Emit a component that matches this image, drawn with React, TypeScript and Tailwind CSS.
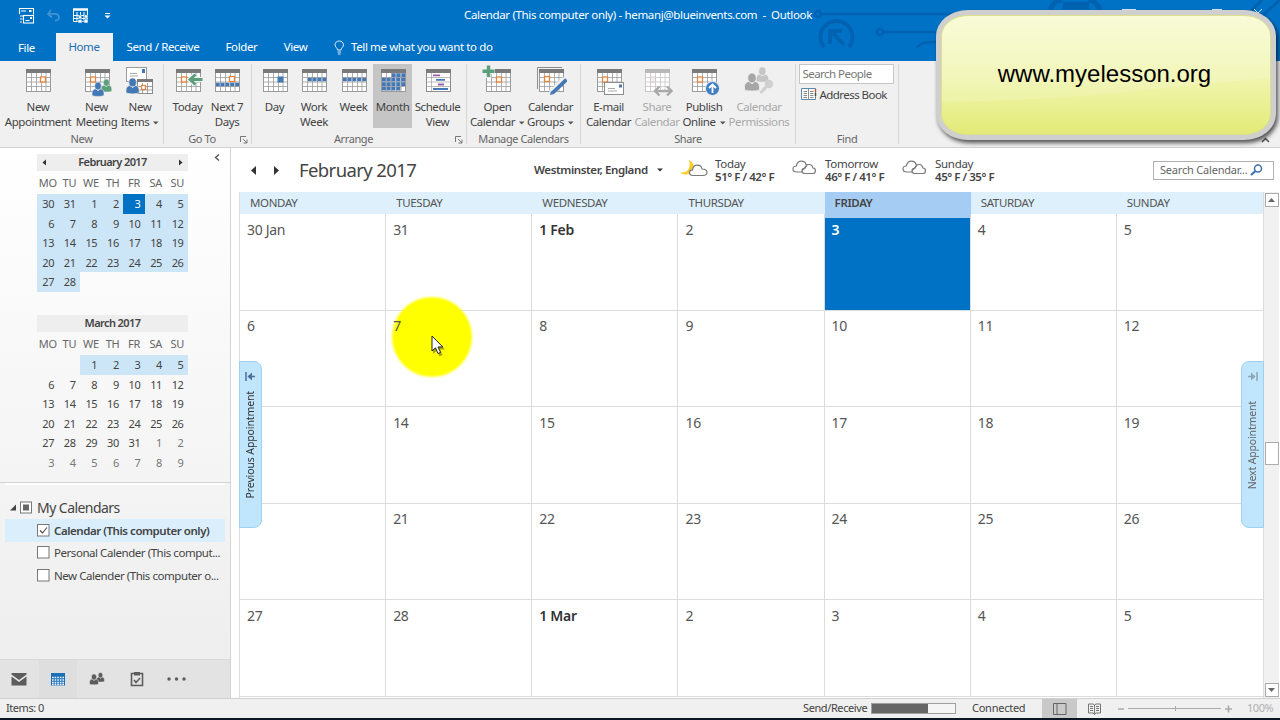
import type { ReactNode } from "react";

const gray = "#7a7a7a";

/* Base calendar glyph shared by most of the ribbon buttons */
const CalGrid = ({ x = 3, y = 4, line = "#9a9a9a", head = gray }) => (
  <g transform={`translate(${x} ${y})`}>
    <rect x="0.5" y="0.5" width="24" height="22" fill="#fff" stroke={line} />
    <path
      d="M5.5 4v18M10.5 4v18M15.5 4v18M20 4v18M1 8.5h23M1 13h23M1 17.5h23"
      stroke={line}
      strokeWidth="0.8"
      fill="none"
    />
    <rect width="25" height="4" fill={head} />
  </g>
);

const Person = ({ x = 0, y = 0, s = 1, fill = "#4478b4" }) => (
  <g transform={`translate(${x} ${y}) scale(${s})`} fill={fill} stroke="#f0f0f0" strokeWidth="0.6">
    <path d="M0 13.500V11c0-2.600 1.800-4.200 4-4.200l2 2 2-2c2.200 0 4 1.600 4 4.200v2.500c-3 1.300-9 1.300-12 0z" />
    <ellipse cx="6" cy="4" rx="3.400" ry="4" />
  </g>
);

const OrangeBox = ({ x = 17.5, y = 11.5 }) => (
  <rect x={x} y={y} width="5" height="5" fill="#fff" stroke="#e8833a" strokeWidth="1.300" />
);

const Icon = ({ children }: { children: ReactNode }) => (
  <svg width="32" height="32" viewBox="0 0 32 32" className="shrink-0">
    {children}
  </svg>
);

const icons: Record<string, ReactNode> = {
  appointment: (
    <Icon>
      <CalGrid x={4} />
      <OrangeBox x={18.5} y={12} />
    </Icon>
  ),
  meeting: (
    <Icon>
      <CalGrid x={4} />
      <OrangeBox x={9.500} y={12} />
      <Person x={20} y={14} s={0.9} fill="#5a9e7c" />
      <Person x={11} y={17} s={1} />
    </Icon>
  ),
  items: (
    <Icon>
      <rect x="2.5" y="2.5" width="20" height="14" fill="#fff" stroke="#9a9a9a" />
      <rect x="18" y="4" width="3" height="4" fill="#4478b4" />
      <path d="M6 8.500h7M6 11h8" stroke="#aaa" />
      <rect x="13.500" y="14.500" width="15" height="14" fill="#fff" stroke="#8c8c8c" />
      <path d="M18.500 18v10M23.500 18v10M14 21.500h14M14 25h14" stroke="#8c8c8c" strokeWidth=".8" />
      <rect x="13" y="14" width="16" height="3" fill={gray} />
      <rect x="17.500" y="20.500" width="4" height="4" fill="#fff" stroke="#e8833a" strokeWidth="1.200" />
      <Person x={2} y={13} s={1.100} />
    </Icon>
  ),
  today: (
    <Icon>
      <CalGrid x={4} />
      <OrangeBox x={9.500} y={12} />
      <path d="M30.500 14.500H19M23 9.500l-5 5 5 5" stroke="#f0f0f0" strokeWidth="5" fill="none" />
      <path d="M30.500 14.500H18M23.500 9.500l-5.500 5 5.500 5" stroke="#5a9e7c" strokeWidth="2.800" fill="none" />
    </Icon>
  ),
  next7: (
    <Icon>
      <CalGrid x={4} />
      <OrangeBox x={18.5} y={11.500} />
      <path d="M5 19.500h23" stroke="#4478b4" strokeWidth="3.500" strokeDasharray="3.800 1" />
    </Icon>
  ),
  day: (
    <Icon>
      <CalGrid x={4} />
      <rect x="18.500" y="11.500" width="6" height="6" fill="#4478b4" />
    </Icon>
  ),
  workweek: (
    <Icon>
      <CalGrid x={4} />
      <path d="M10 14.500h18.500" stroke="#4478b4" strokeWidth="3.600" strokeDasharray="3.800 1" />
    </Icon>
  ),
  week: (
    <Icon>
      <CalGrid x={4} />
      <path d="M5 14.500h24" stroke="#4478b4" strokeWidth="3.600" strokeDasharray="3.800 1" />
    </Icon>
  ),
  month: (
    <Icon>
      <CalGrid x={4} />
      <path
        d="M14.800 10.200h13.800M5 14.700h24M5 19.200h24M5 23.700h18.500"
        stroke="#4478b4"
        strokeWidth="3.700"
        strokeDasharray="3.900 .9"
      />
    </Icon>
  ),
  schedule: (
    <Icon>
      <rect x="4.500" y="4.500" width="24" height="22" fill="#fff" stroke="#8c8c8c" />
      <path d="M9.500 8v18M5 12.500h23M5 17h23M5 21.500h23" stroke="#aaa" strokeWidth=".8" />
      <rect x="4" y="4" width="25" height="4" fill={gray} />
      <path d="M11 10.300h7M16 19.500h6" stroke="#9a5fb0" strokeWidth="1.800" />
      <path d="M14 14.800h9M11 24h15" stroke="#4478b4" strokeWidth="1.800" />
    </Icon>
  ),
  open: (
    <Icon>
      <CalGrid x={4} />
      <OrangeBox x={14.500} y={12} />
      <path d="M6.500 0v13M0 6.500h13" stroke="#f0f0f0" strokeWidth="5.500" />
      <path d="M6.500 0.500v11.500M.5 6.300h12" stroke="#5a9e7c" strokeWidth="3.400" />
    </Icon>
  ),
  groups: (
    <Icon>
      <path d="M2.500 24V2.500H27" stroke="#8c8c8c" fill="none" />
      <CalGrid x={4} />
      <OrangeBox x={9.500} y={11.500} />
      <path d="M30 14L16 28" stroke="#f0f0f0" strokeWidth="6" />
      <path d="M31.500 14.500L17.500 28" stroke="#4478b4" strokeWidth="3.800" />
      <path d="M15 30l1-4 3 3z" fill="#4478b4" />
    </Icon>
  ),
  email: (
    <Icon>
      <CalGrid x={4} />
      <OrangeBox x={9.500} y={12} />
      <rect x="11.500" y="17.500" width="19" height="12" fill="#fff" stroke="#8c8c8c" />
      <rect x="26" y="19.500" width="3" height="3" fill="#4478b4" />
      <path d="M15 23.500h7M15 26h9" stroke="#aaa" />
    </Icon>
  ),
  share: (
    <Icon>
      <CalGrid x={4} line="#c9c5c9" head="#b9b6b9" />
      <rect x="9.500" y="12" width="5" height="5" fill="#f0f0f0" stroke="#d9c9c6" />
      <path
        d="M15 26h15M18.500 21.500L14 26l4.500 4.500M26 21.500l4.500 4.500-4.500 4.500"
        stroke="#a9a9a9"
        strokeWidth="2.400"
        fill="none"
      />
    </Icon>
  ),
  publish: (
    <Icon>
      <CalGrid x={4} />
      <OrangeBox x={9.500} y={12} />
      <circle cx="24.500" cy="23.500" r="7" fill="#3f7fc1" stroke="#f0f0f0" />
      <path d="M24.500 28v-8M21 23l3.500-3.500L28 23" stroke="#fff" strokeWidth="1.800" fill="none" />
    </Icon>
  ),
  permissions: (
    <Icon>
      <Person x={13} y={2} s={1.050} fill="#c4c4c4" />
      <Person x={1.500} y={8} s={1.250} fill="#a6a6a6" />
      <circle cx="26" cy="19" r="4.200" fill="#d0d0d0" />
      <path d="M24 21l-6.500 7" stroke="#d0d0d0" strokeWidth="3.200" />
    </Icon>
  ),
};

const Caret = () => (
  <svg width="6" height="4" viewBox="0 0 6 4" className="ml-1 inline-block align-middle">
    <path d="M0 .5h5.500L2.750 3.500z" fill="#555" />
  </svg>
);

type BtnProps = {
  icon: string;
  top: string;
  bottom?: string;
  width: string;
  caret?: boolean;
  active?: boolean;
  disabled?: boolean;
};

const RibbonButton = ({ icon, top, bottom, width, caret, active, disabled }: BtnProps) => (
  <button
    className={`flex h-16 shrink-0 flex-col items-center pt-[1px] text-[11.500px] leading-[15px] tracking-[-0.42px] whitespace-nowrap ${width} ${
      active ? "bg-[#c5c5c5]" : ""
    } ${disabled ? "text-[#a8a8a8]" : "text-[#444]"}`}
  >
    {icons[icon]}
    <span className="mt-0.5">{top}</span>
    {bottom && (
      <span>
        {bottom}
        {caret && <Caret />}
      </span>
    )}
  </button>
);

const RibbonGroup = ({
  label,
  width,
  launcher,
  children,
}: {
  label: string;
  width: string;
  launcher?: boolean;
  children: ReactNode;
}) => (
  <div className={`flex h-20 shrink-0 flex-col border-r border-[#d6d6d6] ${width}`}>
    <div className="flex h-16 shrink-0 justify-center">{children}</div>
    <div className="flex h-[23px] shrink-0 items-center text-[11px] tracking-[-0.4px] text-[#666]">
      <span className="flex-1 text-center">{label}</span>
      {launcher && (
        <svg width="8" height="8" viewBox="0 0 8 8" className="mr-[3px]">
          <path d="M.5 6V.5H6M3 3l4 4M7 3.500V7H3.500" stroke="#777" fill="none" />
        </svg>
      )}
    </div>
  </div>
);

const weekdays = ["MO", "TU", "WE", "TH", "FR", "SA", "SU"];

const february = [
  [30, 31, 1, 2, 3, 4, 5],
  [6, 7, 8, 9, 10, 11, 12],
  [13, 14, 15, 16, 17, 18, 19],
  [20, 21, 22, 23, 24, 25, 26],
  [27, 28],
];

const march = [
  [0, 0, 1, 2, 3, 4, 5],
  [6, 7, 8, 9, 10, 11, 12],
  [13, 14, 15, 16, 17, 18, 19],
  [20, 21, 22, 23, 24, 25, 26],
  [27, 28, 29, 30, 31, 1, 2],
  [3, 4, 5, 6, 7, 8, 9],
];

const MiniMonth = ({ title, weeks, current }: { title: string; weeks: number[][]; current?: boolean }) => (
  <div className="w-[151px] text-[11px]">
    <div className="flex h-[17px] items-center justify-between bg-[#eeeeee] px-1 font-semibold text-[#444]">
      <svg width="6" height="7" viewBox="0 0 6 7">
        {current && <path d="M5 .5v6L1.500 3.500z" fill="#333" />}
      </svg>
      <span className="tracking-[-0.6px]">{title}</span>
      <svg width="6" height="7" viewBox="0 0 6 7">
        {current && <path d="M1 .5v6l3.500-3z" fill="#333" />}
      </svg>
    </div>
    <div className="grid h-[23px] grid-cols-7 items-center pt-0.5 text-center tracking-[-0.3px] text-[#666]">
      {weekdays.map((d) => (
        <span key={d}>{d}</span>
      ))}
    </div>
    {weeks.map((week, w) => (
      <div key={w} className="grid h-[19.6px] grid-cols-7 text-right leading-[19.6px] tracking-[-0.4px]">
        {week.map((d, i) => {
          const shaded = current || (w === 0 && d > 0);
          const today = current && w === 0 && d === 3;
          const faded = !current && w > 3 && d < 10;
          return (
            <span
              key={i}
              className={`pr-[4.500px] ${today ? "bg-[#0072c6] text-white" : shaded ? "bg-[#cde6f7]" : ""} ${
                today ? "" : faded ? "text-[#777]" : "text-[#444]"
              }`}
            >
              {d > 0 ? d : ""}
            </span>
          );
        })}
      </div>
    ))}
  </div>
);

const Cloud = () => (
  <svg
    width="24"
    height="16"
    viewBox="0 0 24 16"
    className="ml-[3px] shrink-0"
    fill="#fff"
    stroke="#7a7a7a"
    strokeWidth="1.200"
  >
    <path d="M5 12C2.500 12 1 10.800 1 9s1.500-3 3.300-3C5 3 7 1.200 9.500 1.200S13.500 2.500 14 4.500c2 0 3 1.500 3 3.500S15.500 12 13 12z" />
    <path d="M13 13.500c-2 0-3-1-3-2.500s1-2.600 2.800-2.600C13.500 6 15 4.500 17.300 4.500S20.500 6 20.900 8c1.500 0 2.500 1.200 2.500 2.700s-1.200 2.800-2.500 2.800z" />
    <path d="M10 10.500L14.500 6" />
  </svg>
);

const MoonCloud = () => (
  <svg width="30" height="18" viewBox="-1 0 30 18" className="shrink-0">
    <path d="M9 0c4.500 2 6 6.500 4 10.500-2.500 4.500-9 5.500-13 2 4.500.5 8-1 9-4.500s.8-5 0-8z" fill="#fbcf2b" />
    <path
      d="M13 15.500c-2.500 0-3.500-1.300-3.500-3s1.500-2.700 3-2.700C13 7 15 5.200 17.300 5.200S21.500 6.500 22 9c3 0 5 1 5 3.300s-1.500 3.200-4 3.200z"
      fill="#fff"
      stroke="#7a7a7a"
      strokeWidth="1.200"
    />
  </svg>
);

const Weather = ({ icon, day, temp }: { icon: ReactNode; day: string; temp: string }) => (
  <div className="flex w-[110px]">
    <div className="flex w-[36px] shrink-0 justify-start pt-[3px]">{icon}</div>
    <div className="text-[11.500px] leading-[13.500px] whitespace-nowrap text-[#444]">
      <div className="tracking-[-0.3px]">{day}</div>
      <div className="font-semibold tracking-[-0.45px]">{temp}</div>
    </div>
  </div>
);

const days = ["MONDAY", "TUESDAY", "WEDNESDAY", "THURSDAY", "FRIDAY", "SATURDAY", "SUNDAY"];

const rows = [
  ["30 Jan", "31", "1 Feb", "2", "3", "4", "5"],
  ["6", "7", "8", "9", "10", "11", "12"],
  ["", "14", "15", "16", "17", "18", "19"],
  ["", "21", "22", "23", "24", "25", "26"],
  ["27", "28", "1 Mar", "2", "3", "4", "5"],
];

const TitleBar = () => (
  <div className="relative h-[61px] bg-[#0072c6] text-[11.500px] text-white">
    <svg
      className="absolute top-0 right-0"
      width="500"
      height="61"
      viewBox="780 0 500 61"
      fill="none"
      stroke="#0062b0"
      strokeWidth="2.500"
    >
      <circle cx="818" cy="14" r="3" />
      <path d="M822 14h130M883 32h60M917 47c6-5 8-5 22-5" />
      <circle cx="880" cy="32" r="3" />
      <path d="M824 47a16 16 0 1 1 25 0" strokeWidth="4" />
      <path d="M830 44V31h12M831 31l13 14" strokeWidth="4" />
      <path d="M1050 10c3-7 8-10 12-10M1100 10c-3-7-8-10-12-10" strokeWidth="5" />
      <rect x="1064" y="3" width="24" height="5" fill="#0062b0" />
      <path d="M1250 12l12-12M1262 16l18-16" strokeWidth="3" />
      <path d="M1122 9.500h14M1212 9.500h10M1254 9l8 8M1262 9l-8 8" stroke="#d7e8f6" strokeWidth="1" />
    </svg>
    <div className="relative flex h-[33px] items-center">
      <svg width="130" height="33" viewBox="0 0 130 33" fill="none" stroke="#fff">
        <path d="M19.500 14V8.500h14v6M21 11h5M20 16h4M20 19h2.500M20 22h2" strokeWidth="1.100" />
        <rect x="29" y="10" width="2.500" height="2" fill="#fff" stroke="none" />
        <rect x="23.500" y="15.500" width="10" height="7.500" strokeWidth="1.100" />
        <path d="M25.500 20.500h4" />
        <rect x="30" y="17" width="2" height="2" fill="#fff" stroke="none" />
        <path
          d="M51 10l-3 4 4 3.500M48.500 13.800h6c3 0 4.500 1.500 4.500 3.500s-1.500 3.200-4 3.200"
          stroke="#3f92d4"
          strokeWidth="1.800"
        />
        <path d="M73.500 9.500h14v12h-14zM77 12v9M80.500 12v9M84 12v9M74 15.500h13M74 18.500h13" />
        <path d="M73 9.500h15" strokeWidth="2.500" />
        <path d="M78 23v-2.500c0-1.500 4-1.500 4 0V23zM84 23v-3c0-1.500 4-1.500 4 0V23z" fill="#fff" stroke="#0072c6" strokeWidth=".6" />
        <circle cx="80" cy="17" r="1.800" fill="#fff" stroke="#0072c6" strokeWidth=".5" />
        <circle cx="86" cy="16.500" r="1.800" fill="#fff" stroke="#0072c6" strokeWidth=".5" />
        <path d="M105 13.500h5" />
        <path d="M104.500 15.500h6l-3 3z" fill="#fff" stroke="none" />
      </svg>
      <span className="mb-[3px] ml-[334px] leading-none tracking-[-0.35px] whitespace-nowrap">
        Calendar (This computer only) - hemanj@blueinvents.com&nbsp; -&nbsp; Outlook
      </span>
    </div>
    <div className="flex h-7 items-center tracking-[-0.38px] whitespace-nowrap">
      <span className="w-[56px] pt-px pl-[18px]">File</span>
      <span className="flex h-7 w-[57px] items-center justify-center bg-[#f0f0f0] pr-px pb-px text-[#1a6fb5]">Home</span>
      <span className="w-[100px] pb-px text-center">Send / Receive</span>
      <span className="w-[57px] pb-px text-center">Folder</span>
      <span className="w-[51px] pb-px text-center">View</span>
      <svg width="11" height="15" viewBox="0 0 11 15" className="ml-[13px]" fill="none" stroke="#e5f0f9">
        <path d="M3.500 10C3.500 8 1 7 1 4.800 1 2.500 3 1 5.200 1s4.300 1.500 4.300 3.800C9.500 7 7 8 7 10zM3.500 12h3.500M4 14h2.500" />
      </svg>
      <span className="ml-[6px] pb-px">Tell me what you want to do</span>
    </div>
  </div>
);

const Ribbon = () => (
  <div className="flex h-[87px] border-b border-[#d0d0d0] bg-[#f0f0f0] pt-[3px]">
    <RibbonGroup label="New" width="w-[164px]">
      <RibbonButton icon="appointment" top="New" bottom="Appointment" width="w-[76px]" />
      <RibbonButton icon="meeting" top="New" bottom="Meeting" width="w-[41px]" />
      <RibbonButton icon="items" top="New" bottom="Items" caret width="w-[46px]" />
    </RibbonGroup>
    <RibbonGroup label="Go To" width="w-[88px]" launcher>
      <RibbonButton icon="today" top="Today" width="w-[39px]" />
      <RibbonButton icon="next7" top="Next 7" bottom="Days" width="w-[40px]" />
    </RibbonGroup>
    <RibbonGroup label="Arrange" width="w-[215px]" launcher>
      <RibbonButton icon="day" top="Day" width="w-[39px]" />
      <RibbonButton icon="workweek" top="Work" bottom="Week" width="w-[40px]" />
      <RibbonButton icon="week" top="Week" width="w-[39px]" />
      <RibbonButton icon="month" top="Month" width="w-[39px]" active />
      <RibbonButton icon="schedule" top="Schedule" bottom="View" width="w-[51px]" />
    </RibbonGroup>
    <RibbonGroup label="Manage Calendars" width="w-[114px]">
      <RibbonButton icon="open" top="Open" bottom="Calendar" caret width="w-[54px]" />
      <RibbonButton icon="groups" top="Calendar" bottom="Groups" caret width="w-[52px]" />
    </RibbonGroup>
    <RibbonGroup label="Share" width="w-[215px]">
      <RibbonButton icon="email" top="E-mail" bottom="Calendar" width="w-[48px]" />
      <RibbonButton icon="share" top="Share" bottom="Calendar" width="w-[49px]" disabled />
      <RibbonButton icon="publish" top="Publish" bottom="Online" caret width="w-[45px]" />
      <RibbonButton icon="permissions" top="Calendar" bottom="Permissions" width="w-[65px]" disabled />
    </RibbonGroup>
    <RibbonGroup label="Find" width="w-[103px]">
      <div className="mr-[2px] w-[95px] text-[11.500px]">
        <div className="flex h-5 items-center border border-[#c6c6c6] bg-white px-[3px] tracking-[-0.55px] whitespace-nowrap text-[#777]">
          Search People
        </div>
        <div className="mt-[2px] flex items-center gap-[3px] pl-[2px] whitespace-nowrap text-[#444]">
          <svg width="16" height="13" viewBox="0 0 16 13" fill="#fff">
            <path d="M.5.5h14v11H.5z" stroke="#5b86ad" />
            <path
              d="M7.500 1v11M2.500 3.500H6M2.500 5.500H6M2.500 7.500H6M2.500 9.500H6M9 3.500h3.500M9 5.500h3.500M9 7.500h3.500M9 9.500h3.500"
              stroke="#8c8c8c"
            />
            <path d="M14.500 1v3" stroke="#d24726" strokeWidth="1.500" />
            <path d="M14.500 5v3" stroke="#444" strokeWidth="1.500" />
          </svg>
          <span className="tracking-[-0.55px]">Address Book</span>
        </div>
      </div>
    </RibbonGroup>
    <svg width="9" height="6" viewBox="0 0 9 6" className="mr-[10px] mb-1 ml-auto self-end">
      <path d="M1 5l3.500-3.500L8 5" stroke="#555" strokeWidth="1.500" fill="none" />
    </svg>
  </div>
);

const CheckRow = ({ label, checked }: { label: string; checked?: boolean }) => (
  <div
    className={`flex h-[22.500px] items-center pl-8 text-[11.500px] whitespace-nowrap text-[#444] ${
      checked ? "bg-[#dbeefb] font-semibold" : ""
    }`}
  >
    <svg width="13" height="13" viewBox="0 0 13 13" className="mr-1 shrink-0">
      <rect x=".5" y=".5" width="11.500" height="11.500" fill="#fff" stroke="#777" />
      {checked && <path d="M3 6.500l2.500 2.500 4.500-5.500" stroke="#444" strokeWidth="1.100" fill="none" />}
    </svg>
    <span className="tracking-[-0.45px]">{label}</span>
  </div>
);

const Sidebar = () => (
  <div className="flex w-[231px] shrink-0 flex-col border-r border-[#d4d4d4] bg-linear-to-b from-white to-[#ededed]">
    <div className="flex h-[335px] justify-between border-b border-[#d4d4d4] pt-[6px] pr-[10px] pl-[37px]">
      <div className="flex flex-col gap-[23px]">
        <MiniMonth title="February 2017" weeks={february} current />
        <MiniMonth title="March 2017" weeks={march} />
      </div>
      <svg width="6" height="8" viewBox="0 0 6 8">
        <path d="M5 .5L1.500 3.500 5 6.500" stroke="#555" strokeWidth="1.400" fill="none" />
      </svg>
    </div>
    <div className="mr-[5px] ml-[5px] border-t-2 border-white pt-[11px]">
      <div className="flex h-[23px] items-center pl-[4px] text-[14px] text-[#444]">
        <svg width="26" height="13" viewBox="0 0 26 13" className="mr-[2px]">
          <path d="M7 3.500V9.500H1z" fill="#444" />
          <rect x="11.500" y="1" width="11" height="11" fill="#fff" stroke="#777" />
          <rect x="14" y="3.500" width="6" height="6" fill="#666" />
        </svg>
        <span className="tracking-[-0.55px]">My Calendars</span>
      </div>
      <CheckRow label="Calendar (This computer only)" checked />
      <CheckRow label="Personal Calender (This comput..." />
      <CheckRow label="New Calender (This computer o..." />
    </div>
    <div className="mt-auto flex h-[39px] items-center border-t border-[#d8d8d8] bg-[#e3e3e3]">
      <div className="flex w-[39px] justify-center pr-[2px]">
        <svg width="16" height="13" viewBox="0 0 16 13">
          <path d="M.5 0h15v1.500L8 7 .5 1.500zM.5 3.500L8 9l7.500-5.500V12.500H.5z" fill="#5c5c5c" />
        </svg>
      </div>
      <div className="flex h-full w-[38px] items-center justify-center bg-[#dedede]">
        <svg width="14" height="13" viewBox="0 0 14 13">
          <rect width="14" height="12.500" fill="#1b6fb8" />
          <path
            d="M1 4.500h12M1 7h12M1 9.500h12M1 11.500h12"
            stroke="#e8f2fa"
            strokeWidth="1.500"
            strokeDasharray="1.700 .9"
          />
        </svg>
      </div>
      <div className="flex w-[40px] justify-center">
        <svg width="16" height="14" viewBox="0 0 16 14">
          <Person x={7.500} y={0.500} s={0.660} fill="#5c5c5c" />
          <Person x={0.500} y={2} s={0.750} fill="#5c5c5c" />
        </svg>
      </div>
      <div className="flex w-[39px] justify-center">
        <svg width="14" height="16" viewBox="0 0 14 16" fill="none" stroke="#5c5c5c">
          <path d="M4 2.500H1.500v12h11v-12H10" strokeWidth="1.600" />
          <path d="M4 1h6v3.500H4z" fill="#5c5c5c" stroke="none" />
          <path d="M4 9l2 2.500 4-4.500" strokeWidth="1.500" />
        </svg>
      </div>
      <div className="flex w-[41px] justify-center">
        <svg width="20" height="4" viewBox="0 0 20 4" fill="#5c5c5c">
          <circle cx="2" cy="2" r="1.700" />
          <circle cx="9.500" cy="2" r="1.700" />
          <circle cx="17" cy="2" r="1.700" />
        </svg>
      </div>
    </div>
  </div>
);

const CalendarHeader = () => (
  <div className="flex h-11 shrink-0 items-center pl-[11px] text-[#444]">
    <svg width="30" height="9" viewBox="0 0 30 9" fill="#333">
      <path d="M6 0v9L1 4.500zM24 0v9l5-4.500z" />
    </svg>
    <span className="ml-[19px] w-[235px] text-[18.500px] tracking-[-0.6px]">February 2017</span>
    <span className="w-[119px] text-[11.500px] font-semibold tracking-[-0.38px] whitespace-nowrap">
      Westminster, England
    </span>
    <svg width="6" height="4" viewBox="0 0 6 4" className="ml-1">
      <path d="M0 .5h6L3 3.500z" fill="#333" />
    </svg>
    <div className="ml-4 flex">
      <Weather icon={<MoonCloud />} day="Today" temp="51° F / 42° F" />
      <Weather icon={<Cloud />} day="Tomorrow" temp="46° F / 41° F" />
      <Weather icon={<Cloud />} day="Sunday" temp="45° F / 35° F" />
    </div>
    <div className="mr-[6px] ml-auto flex h-[19px] w-[121px] items-center border border-[#b0b0b0] bg-white pl-[6px] text-[11px] text-[#666]">
      <span className="tracking-[-0.2px] whitespace-nowrap">Search Calendar...</span>
      <svg width="13" height="12" viewBox="0 0 13 12" className="ml-[2px]" fill="none" stroke="#3f6fb0">
        <circle cx="8" cy="4.500" r="3.500" strokeWidth="1.500" />
        <path d="M5.500 7L1 11" strokeWidth="2.200" />
      </svg>
    </div>
  </div>
);

const MonthView = () => (
  <div className="relative w-[1025px] shrink-0 border-x border-[#dcdcdc]">
    <div className="grid h-[22px] grid-cols-7 bg-[#ddf0fc] text-[11.500px] leading-[22px] tracking-[-0.35px] text-[#555]">
      {days.map((d) => (
        <div key={d} className={`pl-[10px] ${d === "FRIDAY" ? "bg-[#a5cdf3] font-semibold text-[#444]" : ""}`}>
          {d}
        </div>
      ))}
    </div>
    <div className="grid grid-cols-7">
      {rows.map((row, r) =>
        row.map((d, c) => {
          const today = r === 0 && c === 4;
          const bold = d.includes("Feb") || d.includes("Mar") || today;
          return (
            <div
              key={`${r}-${c}`}
              className={`h-[96.600px] border-b border-b-[#dcdcdc] pl-[7px] text-[14px] leading-[20px] ${
                c < 6 ? "border-r border-r-[#dcdcdc]" : ""
              } ${today ? "border-t-4 border-t-[#a5cdf3] bg-[#0072c6] pt-[1.500px] text-white" : "pt-[5.500px]"} ${
                bold ? "font-semibold" : "text-[#555]"
              } ${bold && !today ? "text-[#333]" : ""}`}
            >
              {/* cursor highlight sits under the date */}
              {d === "7" && (
                <div className="relative">
                  <div className="absolute top-[-19px] left-[-1px] h-20 w-20 rounded-full bg-[#ffff00] blur-[1px]" />
                  <svg width="16" height="22" viewBox="0 0 16 22" className="absolute top-[19px] left-[38px]">
                    <path d="M2 2v17l4-3.500 2.500 6 3-1.500-2.500-5.500h5z" fill="#000" opacity=".35" />
                    <path d="M1 1v15l3.500-3.200 2.500 5.700 2.600-1.100L7 12h4.800z" fill="#fff" stroke="#222" />
                  </svg>
                </div>
              )}
              <span className="relative tracking-[-0.3px]">{d}</span>
            </div>
          );
        }),
      )}
    </div>
    <div className="absolute top-[169px] left-[-1px] flex h-[167px] w-[23px] flex-col items-center rounded-r-lg border border-[#a0d0ee] bg-[#bfe6fd] pt-[10px]">
      <svg width="11" height="9" viewBox="0 0 11 9" fill="none" stroke="#4a7298">
        <path d="M1 0v9M10 4.500H3.500" strokeWidth="1.500" />
        <path d="M7 .5v8L2.500 4.500z" fill="#4a7298" stroke="none" />
      </svg>
      <span className="mt-[10px] rotate-180 text-[10.500px] leading-none tracking-[-0.12px] whitespace-nowrap text-[#333] [writing-mode:vertical-rl]">
        Previous Appointment
      </span>
    </div>
    <div className="absolute top-[169px] right-[-1px] flex h-[167px] w-[23px] flex-col items-center rounded-l-lg border border-[#a0d0ee] bg-[#bfe6fd] pt-[10px]">
      <svg width="11" height="9" viewBox="0 0 11 9" fill="none" stroke="#8fa5b5">
        <path d="M10 0v9M1 4.500h6.500" strokeWidth="1.500" />
        <path d="M4 .5v8l4.500-4z" fill="#8fa5b5" stroke="none" />
      </svg>
      <span className="mt-[20px] rotate-180 text-[10.500px] leading-none tracking-[-0.15px] whitespace-nowrap text-[#666] [writing-mode:vertical-rl]">
        Next Appointment
      </span>
    </div>
  </div>
);

const ScrollBar = () => (
  <div className="flex w-[15px] flex-col items-center bg-[#f1f1f1]">
    <div className="mt-[1px] flex h-[14px] w-[14px] items-center justify-center border border-[#ababab] bg-white">
      <svg width="7" height="4" viewBox="0 0 7 4">
        <path d="M0 4h7L3.500 0z" fill="#666" />
      </svg>
    </div>
    <div className="mt-[235px] h-[23px] w-[14px] border border-[#ababab] bg-white" />
    <div className="mt-auto mb-[1px] flex h-[14px] w-[14px] items-center justify-center border border-[#ababab] bg-white">
      <svg width="7" height="4" viewBox="0 0 7 4">
        <path d="M0 0h7L3.500 4z" fill="#666" />
      </svg>
    </div>
  </div>
);

const StatusBar = () => (
  <div className="flex h-5 shrink-0 items-center border-t border-[#d0d0d0] bg-[#f0f0f0] text-[11px] text-[#444]">
    <span className="w-[803px] pl-[6px] tracking-[-0.45px]">Items: 0</span>
    <span className="w-[68px] tracking-[-0.4px]">Send/Receive</span>
    <div className="h-[11px] w-[85px] border border-[#a0a0a0] bg-[#f5f5f5]">
      <div className="h-full w-[56px] bg-[#666]" />
    </div>
    <span className="ml-[16px] w-[70px] tracking-[-0.25px]">Connected</span>
    <div className="flex h-full w-[35px] items-center justify-center bg-[#c9c9c9]">
      <svg width="14" height="12" viewBox="0 0 14 12" fill="none" stroke="#666">
        <path d="M.5.5h12.500v11H.5zM4 .5v11" />
      </svg>
    </div>
    <svg width="13" height="12" viewBox="0 0 13 12" className="ml-[11px]" fill="none" stroke="#777">
      <path d="M.5 1h4.500l1.500 1L8 1h4.500v9H8l-1.500 1L5 10H.5zM6.500 2v10M2 3.500h3M2 5.500h3M2 7.500h3M8 3.500h3M8 5.500h3M8 7.500h3" />
    </svg>
    <svg width="114" height="10" viewBox="0 0 114 10" className="ml-[17px]" stroke="#aaa">
      <path d="M0 5h6M107 5h7M110.500 1.500v7" strokeWidth="1.600" />
      <path d="M10 4.500h93M57.500 2v5" />
    </svg>
    <span className="ml-[15px] tracking-[-0.45px] text-[#b0b0b0]">100%</span>
  </div>
);

const Banner = () => (
  <div className="absolute top-[10px] left-[936px] h-[130px] w-[340px] rounded-[32px/26px] bg-[#cfcfcf] p-[5px] shadow-[2px_3px_4px_rgba(0,0,0,0.65)]">
    <div className="relative flex h-full items-center justify-center overflow-hidden rounded-[27px/21px] border border-[#dde08a] bg-linear-to-b from-[#f9fbd2] via-[#f1f5b0] to-[#e2eb76]">
      <svg width="330" height="120" viewBox="0 0 330 120" className="absolute top-0 left-0">
        <path d="M0 0h330v62C240 68 150 84 0 86z" fill="#fff" opacity=".14" />
      </svg>
      <span className="relative pr-[3px] pb-[3px] font-['Liberation_Sans',sans-serif] text-[24px] text-black">
        www.myelesson.org
      </span>
    </div>
  </div>
);

export default function App() {
  return (
    <div className="relative flex h-[720px] w-[1280px] flex-col overflow-hidden bg-white font-['Noto_Sans','Open_Sans',sans-serif]">
      <TitleBar />
      <Ribbon />
      <div className="flex h-[550px] shrink-0">
        <Sidebar />
        <div className="flex flex-1 flex-col pl-2">
          <CalendarHeader />
          <div className="flex h-[506px]">
            <MonthView />
            <ScrollBar />
          </div>
        </div>
      </div>
      <StatusBar />
      <div className="h-0.5 shrink-0 bg-[#0d1424]" />
      <Banner />
    </div>
  );
}
